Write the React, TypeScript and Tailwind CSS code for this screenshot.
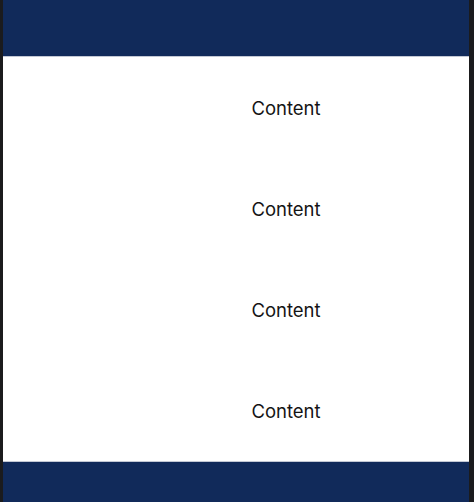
import React from 'react';

const rows = ['Content', 'Content', 'Content', 'Content'];

const App: React.FC = () => {
    return (
        <div className="flex h-[502px] w-[474px] bg-[#1b1b1d]" style={{ fontFamily: 'Inter, "Liberation Sans", sans-serif' }}>
            <div className="ml-[3px] mr-[5px] flex flex-1 flex-col">
                <header className="h-[57px] shrink-0 border-b border-[#c3c8d4] bg-[#112a5a]" />

                <main className="flex flex-1 flex-col bg-white">
                    {rows.map((label, i) => (
                        <div key={i} className="flex flex-1 items-center justify-center pl-[100px] pt-[2px]">
                            <span className="text-[18.5px] leading-none text-[#141414]">{label}</span>
                        </div>
                    ))}
                </main>

                <footer className="h-[41px] shrink-0 border-t border-[#c3c8d4] bg-[#112a5a]" />
            </div>
        </div>
    );
};

export default App;
